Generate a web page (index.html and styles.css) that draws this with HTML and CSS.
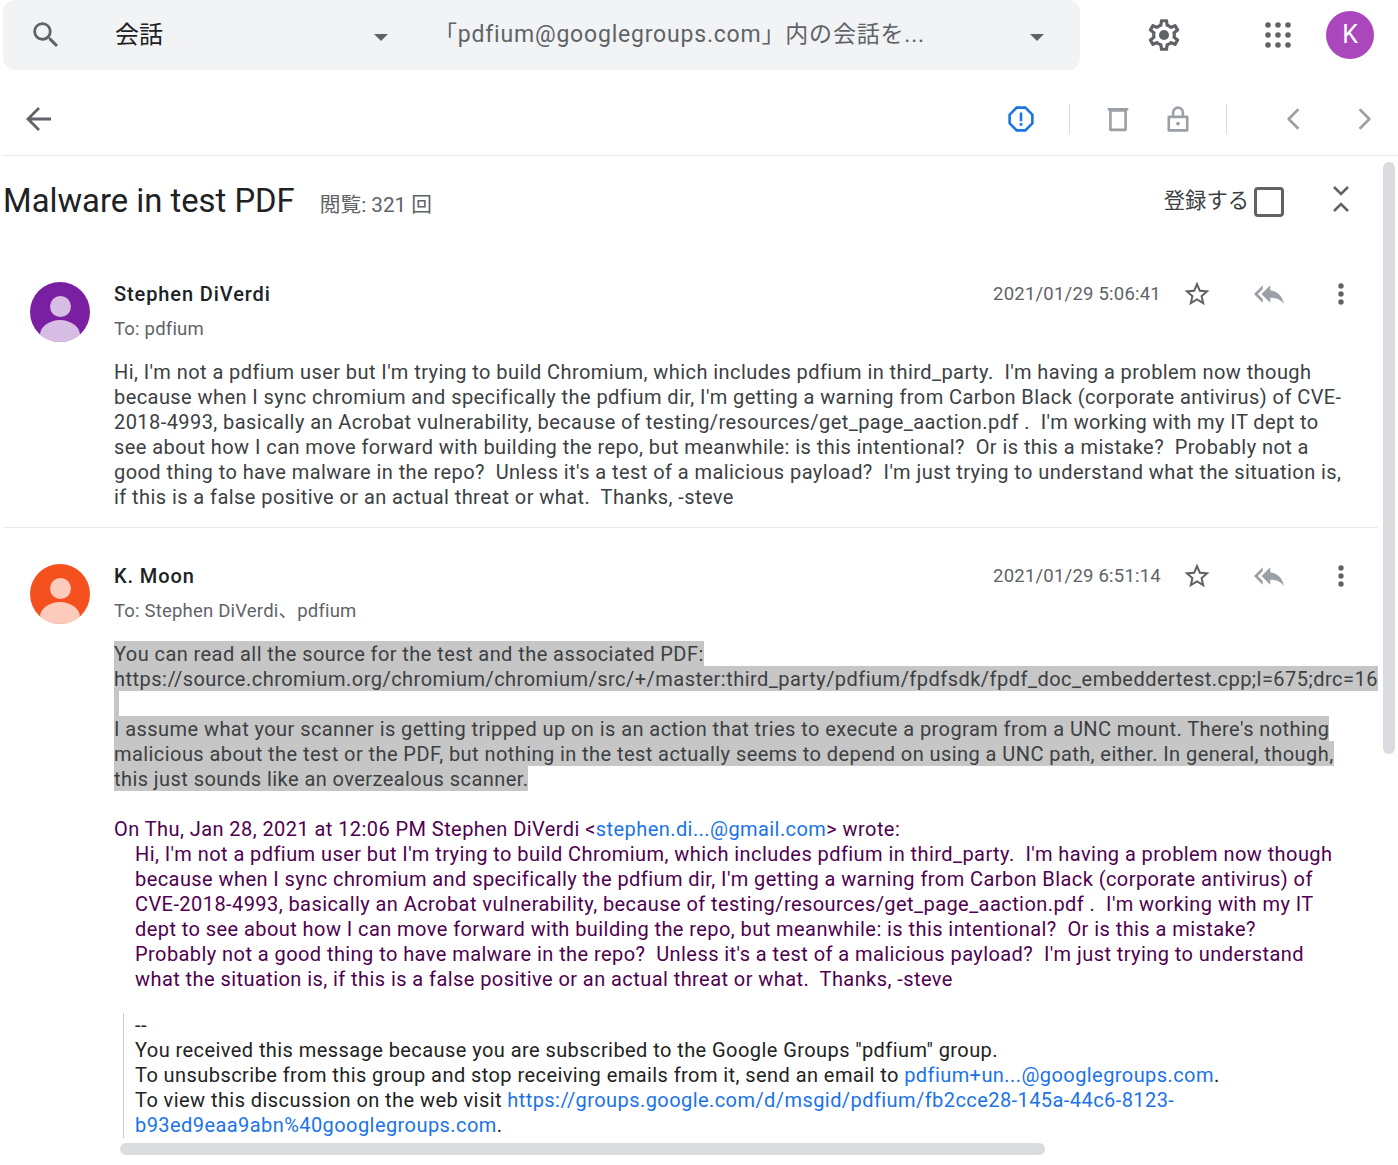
FILE: index.html
```html
<!DOCTYPE html>
<html lang="ja">
<head>
    <meta charset="UTF-8">
    <title>Malware in test PDF</title>
    <link rel="stylesheet" href="styles.css">
</head>
<body>
    <div class="topbar">
        <div class="search-box">
            <svg class="search-icon" viewBox="0 0 24 24"><path d="M15.5 14h-.79l-.28-.27A6.471 6.471 0 0 0 16 9.5 6.5 6.5 0 1 0 9.5 16c1.61 0 3.09-.59 4.23-1.57l.27.28v.79l5 4.99L20.49 19l-4.99-5zm-6 0C7.01 14 5 11.99 5 9.5S7.01 5 9.5 5 14 7.01 14 9.5 11.99 14 9.5 14z"/></svg>
            <span class="scope">会話</span>
            <span class="caret caret-scope"></span>
            <span class="query">「pdfium@googlegroups.com」内の会話を...</span>
            <span class="caret"></span>
        </div>
        <svg class="gear-icon" viewBox="0 0 24 24"><path d="M19.43 12.98c.04-.32.07-.64.07-.98 0-.34-.03-.66-.07-.98l2.11-1.65c.19-.15.24-.42.12-.64l-2-3.46c-.09-.16-.26-.25-.44-.25-.06 0-.12.01-.17.03l-2.49 1c-.52-.4-1.08-.73-1.69-.98l-.38-2.65C14.46 2.18 14.25 2 14 2h-4c-.25 0-.46.18-.49.42l-.38 2.65c-.61.25-1.17.59-1.69.98l-2.49-1c-.06-.02-.12-.03-.18-.03-.17 0-.34.09-.43.25l-2 3.46c-.13.22-.07.49.12.64l2.11 1.65c-.04.32-.07.65-.07.98 0 .33.03.66.07.98l-2.11 1.65c-.19.15-.24.42-.12.64l2 3.46c.09.16.26.25.44.25.06 0 .12-.01.17-.03l2.49-1c.52.4 1.08.73 1.69.98l.38 2.65c.03.24.24.42.49.42h4c.25 0 .46-.18.49-.42l.38-2.65c.61-.25 1.17-.59 1.69-.98l2.49 1c.06.02.12.03.18.03.17 0 .34-.09.43-.25l2-3.46c.12-.22.07-.49-.12-.64l-2.11-1.65zm-1.98-1.71c.04.31.05.52.05.73 0 .21-.02.43-.05.73l-.14 1.13.89.7 1.08.84-.7 1.21-1.27-.51-1.04-.42-.9.68c-.43.32-.84.56-1.25.73l-1.06.43-.16 1.13-.2 1.35h-1.4l-.19-1.35-.16-1.13-1.06-.43c-.43-.18-.83-.41-1.23-.71l-.91-.7-1.06.43-1.27.51-.7-1.21 1.08-.84.89-.7-.14-1.13c-.03-.31-.05-.54-.05-.74s.02-.43.05-.73l.14-1.13-.89-.7-1.08-.84.7-1.21 1.27.51 1.04.42.9-.68c.43-.32.84-.56 1.25-.73l1.06-.43.16-1.13.2-1.35h1.39l.19 1.35.16 1.13 1.06.43c.43.18.83.41 1.23.71l.91.7 1.06-.43 1.27-.51.7 1.21-1.07.85-.89.7.14 1.13z"/><circle cx="12" cy="12" r="3.200"/></svg>
        <svg class="apps-icon" viewBox="0 0 26 26">
            <circle cx="3" cy="3" r="2.800"/><circle cx="13" cy="3" r="2.800"/><circle cx="23" cy="3" r="2.800"/>
            <circle cx="3" cy="13" r="2.800"/><circle cx="13" cy="13" r="2.800"/><circle cx="23" cy="13" r="2.800"/>
            <circle cx="3" cy="23" r="2.800"/><circle cx="13" cy="23" r="2.800"/><circle cx="23" cy="23" r="2.800"/>
        </svg>
        <div class="account">K</div>
    </div>

    <div class="toolbar">
        <svg class="back-icon" viewBox="0 0 26 26"><path d="M25 13H2M13 2 2 13l11 11"/></svg>
        <div class="toolbar-right">
            <span class="tool"><svg class="report-icon" viewBox="0 0 24 24"><path class="outline" d="M8 1.5h8L22.5 8v8L16 22.500H8L1.500 16V8z"/><path class="mark" d="M10.800 6h2.400v8h-2.400zM10.800 15.800h2.400v2.400h-2.400z"/></svg></span>
            <span class="tool-sep"></span>
            <span class="tool"><svg class="muted-icon" viewBox="0 0 24 24"><path d="M5 4h14v18H5zM2.500 3h19"/></svg></span>
            <span class="tool tool-close"><svg class="muted-icon" viewBox="0 0 24 24"><path d="M3.500 10h17v12.500h-17zM7.500 10V6a4.500 4.500 0 0 1 9 0v4"/><circle class="dot" cx="12" cy="16.200" r="1.700"/></svg></span>
            <span class="tool-sep tool-sep-wide"></span>
            <span class="tool"><svg class="muted-icon" viewBox="0 0 24 24"><path d="M17 3 8 12l9 9"/></svg></span>
            <span class="tool"><svg class="muted-icon" viewBox="0 0 24 24"><path d="m7 3 9 9-9 9"/></svg></span>
        </div>
    </div>

    <div class="title-row">
        <h1>Malware in test PDF</h1>
        <span class="views">閲覧: 321 回</span>
        <span class="subscribe">登録する</span>
        <span class="checkbox"></span>
        <svg class="collapse-icon" viewBox="0 0 18 28"><path d="m2 2 7 7 7-7M2 26l7-7 7 7"/></svg>
    </div>

    <div class="message message-first">
        <div class="avatar avatar-purple"><span class="avatar-head"></span><span class="avatar-body"></span></div>
        <div class="message-main">
            <div class="message-head">
                <div class="who">
                    <div class="name">Stephen DiVerdi</div>
                    <div class="to">To: pdfium</div>
                </div>
                <span class="date">2021/01/29 5:06:41</span>
                <span class="act"><svg class="star-icon" viewBox="0 0 24 24"><path d="M22 9.240l-7.190-.62L12 2 9.190 8.630 2 9.240l5.460 4.730L5.820 21 12 17.270 18.180 21l-1.630-7.030L22 9.240zM12 15.400l-3.760 2.270 1-4.280-3.320-2.880 4.380-.38L12 6.100l1.710 4.040 4.380.38-3.320 2.880 1 4.280L12 15.400z"/></svg></span>
                <span class="act"><svg class="reply-icon" viewBox="0 0 24 24"><path d="M7 8V5l-7 7 7 7v-3l-4-4 4-4zm6 1V5l-7 7 7 7v-4.100c5 0 8.500 1.600 11 5.100-1-5-4-10-11-11z"/></svg></span>
                <span class="act"><svg class="more-icon" viewBox="0 0 6 22"><circle cx="3" cy="3" r="2.700"/><circle cx="3" cy="11" r="2.700"/><circle cx="3" cy="19" r="2.700"/></svg></span>
            </div>
            <div class="message-body">
                Hi, I'm not a pdfium user but I'm trying to build Chromium, which includes pdfium in third_party.&nbsp; I'm having a problem now though<br>
                because when I sync chromium and specifically the pdfium dir, I'm getting a warning from Carbon Black (corporate antivirus) of CVE-<br>
                2018-4993, basically an Acrobat vulnerability, because of testing/resources/get_page_aaction.pdf .&nbsp; I'm working with my IT dept to<br>
                see about how I can move forward with building the repo, but meanwhile: is this intentional?&nbsp; Or is this a mistake?&nbsp; Probably not a<br>
                good thing to have malware in the repo?&nbsp; Unless it's a test of a malicious payload?&nbsp; I'm just trying to understand what the situation is,<br>
                if this is a false positive or an actual threat or what.&nbsp; Thanks, -steve
            </div>
        </div>
    </div>

    <div class="message">
        <div class="avatar avatar-orange"><span class="avatar-head"></span><span class="avatar-body"></span></div>
        <div class="message-main">
            <div class="message-head">
                <div class="who">
                    <div class="name">K. Moon</div>
                    <div class="to">To: Stephen DiVerdi、pdfium</div>
                </div>
                <span class="date">2021/01/29 6:51:14</span>
                <span class="act"><svg class="star-icon" viewBox="0 0 24 24"><path d="M22 9.240l-7.190-.62L12 2 9.190 8.630 2 9.240l5.460 4.730L5.820 21 12 17.270 18.180 21l-1.630-7.030L22 9.240zM12 15.400l-3.760 2.270 1-4.280-3.320-2.880 4.380-.38L12 6.100l1.710 4.040 4.380.38-3.320 2.880 1 4.280L12 15.400z"/></svg></span>
                <span class="act"><svg class="reply-icon" viewBox="0 0 24 24"><path d="M7 8V5l-7 7 7 7v-3l-4-4 4-4zm6 1V5l-7 7 7 7v-4.100c5 0 8.500 1.600 11 5.100-1-5-4-10-11-11z"/></svg></span>
                <span class="act"><svg class="more-icon" viewBox="0 0 6 22"><circle cx="3" cy="3" r="2.700"/><circle cx="3" cy="11" r="2.700"/><circle cx="3" cy="19" r="2.700"/></svg></span>
            </div>
            <div class="message-body">
                <div class="sel">You can read all the source for the test and the associated PDF:</div>
                <div class="sel sel-url">https://source.chromium.org/chromium/chromium/src/+/master:third_party/pdfium/fpdfsdk/fpdf_doc_embeddertest.cpp;l=675;drc=16</div>
                <div class="sel sel-empty"></div>
                <div class="sel">I assume what your scanner is getting tripped up on is an action that tries to execute a program from a UNC mount. There's nothing</div>
                <div class="sel">malicious about the test or the PDF, but nothing in the test actually seems to depend on using a UNC path, either. In general, though,</div>
                <div class="sel">this just sounds like an overzealous scanner.</div>
                <div class="blank"></div>
                <div class="quote-head">On Thu, Jan 28, 2021 at 12:06 PM Stephen DiVerdi &lt;<a href="#">stephen.di...@gmail.com</a>&gt; wrote:</div>
                <div class="quote">
                    Hi, I'm not a pdfium user but I'm trying to build Chromium, which includes pdfium in third_party.&nbsp; I'm having a problem now though<br>
                    because when I sync chromium and specifically the pdfium dir, I'm getting a warning from Carbon Black (corporate antivirus) of<br>
                    CVE-2018-4993, basically an Acrobat vulnerability, because of testing/resources/get_page_aaction.pdf .&nbsp; I'm working with my IT<br>
                    dept to see about how I can move forward with building the repo, but meanwhile: is this intentional?&nbsp; Or is this a mistake?<br>
                    Probably not a good thing to have malware in the repo?&nbsp; Unless it's a test of a malicious payload?&nbsp; I'm just trying to understand<br>
                    what the situation is, if this is a false positive or an actual threat or what.&nbsp; Thanks, -steve
                </div>
                <div class="footer-quote">
                    --<br>
                    You received this message because you are subscribed to the Google Groups "pdfium" group.<br>
                    To unsubscribe from this group and stop receiving emails from it, send an email to <a href="#">pdfium+un...@googlegroups.com</a>.<br>
                    To view this discussion on the web visit <a href="#">https://groups.google.com/d/msgid/pdfium/fb2cce28-145a-44c6-8123-<br>b93ed9eaa9abn%40googlegroups.com</a>.
                </div>
            </div>
        </div>
    </div>

    <div class="scroll-v"></div>
    <div class="scroll-h"></div>
</body>
</html>
```

FILE: styles.css
```css
html, body {
    margin: 0;
    height: 1165px;
    overflow: hidden;
}
body {
    position: relative;
    background: #fff;
    font-family: Roboto, "Noto Sans CJK JP", sans-serif;
    color: #3c4043;
}
a {
    color: #1a73e8;
    text-decoration: none;
}

/* top bar */
.topbar {
    display: flex;
    align-items: center;
    height: 70px;
}
.search-box {
    display: flex;
    align-items: center;
    width: 1077px;
    height: 70px;
    margin-left: 3px;
    background: #f1f3f4;
    border-radius: 12px;
    box-sizing: border-box;
}
.search-icon {
    width: 34px;
    height: 34px;
    margin-left: 26px;
    fill: #5f6368;
}
.scope {
    width: 259px;
    margin-left: 52px;
    margin-bottom: 6px;
    font-size: 24px;
    color: #202124;
}
.caret {
    width: 0;
    height: 0;
    margin-top: 4px;
    border-left: 7px solid transparent;
    border-right: 7px solid transparent;
    border-top: 7px solid #5f6368;
}
.caret-scope {
    margin-right: 46px;
}
.query {
    width: 596px;
    margin-bottom: 6px;
    font-size: 23px;
    letter-spacing: .8px;
    color: #5f6368;
    white-space: nowrap;
}
.gear-icon {
    width: 38px;
    height: 38px;
    margin-left: 65px;
    fill: #5f6368;
}
.apps-icon {
    width: 26px;
    height: 26px;
    margin-left: 82px;
    fill: #5f6368;
}
.account {
    width: 48px;
    height: 48px;
    margin-left: 35px;
    border-radius: 50%;
    background: #ab47bc;
    color: #fff;
    font-size: 25px;
    line-height: 48px;
    text-align: center;
}

/* toolbar */
.toolbar {
    display: flex;
    align-items: center;
    justify-content: space-between;
    height: 86px;
    margin-left: 2px;
    padding-top: 13px;
    border-bottom: 1px solid #e8eaed;
    box-sizing: border-box;
}
.back-icon {
    width: 26px;
    height: 26px;
    margin-left: 24px;
    fill: none;
    stroke: #5f6368;
    stroke-width: 2.800;
}
.toolbar-right {
    display: flex;
    align-items: center;
    gap: 24px;
    margin-right: 9px;
}
.tool {
    display: flex;
    justify-content: center;
    width: 48px;
}
.tool-close {
    margin-left: -12px;
}
.tool-sep {
    width: 1px;
    height: 30px;
    background: #dadce0;
}
.tool-sep-wide {
    margin-right: 18px;
}
.report-icon {
    width: 26px;
    height: 26px;
}
.report-icon .outline {
    fill: none;
    stroke: #1a73e8;
    stroke-width: 2.400;
}
.report-icon .mark {
    fill: #1a73e8;
}
.muted-icon {
    width: 26px;
    height: 26px;
    fill: none;
    stroke: #9aa0a6;
    stroke-width: 2.400;
    stroke-linejoin: round;
}
.muted-icon .dot {
    fill: #9aa0a6;
    stroke: none;
}

/* title */
.title-row {
    display: flex;
    align-items: center;
    height: 92px;
    padding-left: 3px;
}
h1 {
    margin: 0 0 2px;
    font-size: 32.800px;
    font-weight: 400;
    color: #202124;
}
.views {
    margin-left: 25px;
    margin-top: 2px;
    margin-right: auto;
    font-size: 20.700px;
    color: #5f6368;
}
.subscribe {
    margin-bottom: 8px;
    font-size: 21.300px;
    color: #3c4043;
}
.checkbox {
    width: 24px;
    height: 24px;
    margin-left: 5px;
    margin-bottom: 1px;
    border: 3px solid #5f6368;
    border-radius: 4px;
}
.collapse-icon {
    width: 18px;
    height: 28px;
    margin: 0 48px 6px;
    fill: none;
    stroke: #5f6368;
    stroke-width: 2.600;
}

/* messages */
.message {
    display: flex;
    width: 1375px;
    margin-left: 3px;
    padding: 36px 0 0 27px;
    box-sizing: border-box;
}
.message-first {
    height: 280px;
    padding-top: 34px;
    border-bottom: 1px solid #e8eaed;
}
.avatar {
    position: relative;
    flex: none;
    width: 60px;
    height: 60px;
    overflow: hidden;
    border-radius: 50%;
}
.avatar-purple {
    background: #7b1fa2;
}
.avatar-orange {
    background: #f4511e;
}
.avatar-head {
    position: absolute;
    left: 20px;
    top: 14px;
    width: 21px;
    height: 21px;
    border-radius: 50%;
    background: #fff;
    opacity: .7;
}
.avatar-body {
    position: absolute;
    left: 10px;
    top: 38px;
    width: 40px;
    height: 30px;
    border-radius: 50%;
    background: #fff;
    opacity: .7;
}
.message-main {
    flex: none;
    width: 1263px;
    margin-left: 24px;
}
.message-head {
    display: flex;
    height: 78px;
}
.who {
    margin-right: auto;
}
.name {
    height: 25px;
    font-size: 20px;
    font-weight: 500;
    line-height: 25px;
    letter-spacing: .9px;
    color: #202124;
}
.to {
    margin-top: 10px;
    font-size: 18.500px;
    line-height: 25px;
    letter-spacing: .2px;
    color: #5f6368;
}
.date {
    font-size: 18.500px;
    line-height: 25px;
    letter-spacing: .22px;
    color: #5f6368;
    white-space: nowrap;
}
.act {
    display: flex;
    align-items: center;
    justify-content: center;
    width: 72px;
    height: 23px;
}
.star-icon {
    width: 30px;
    height: 30px;
    fill: #5f6368;
}
.reply-icon {
    width: 30px;
    height: 30px;
    fill: #9aa0a6;
}
.more-icon {
    width: 6px;
    height: 22px;
    fill: #5f6368;
}
.message-body {
    font-size: 20px;
    line-height: 25px;
    letter-spacing: .43px;
    white-space: nowrap;
}
.sel {
    width: fit-content;
    height: 25px;
    line-height: 27px;
    background: #c6c6c6;
}
.sel:first-child {
    margin-top: -1px;
}
.sel-url {
    letter-spacing: .48px;
}
.sel-empty {
    width: 5px;
}
.blank {
    height: 26px;
}
.quote-head {
    color: #500050;
}
.quote {
    padding-left: 21px;
    color: #500050;
}
.footer-quote {
    margin-top: 21px;
    margin-left: 9px;
    padding-left: 11px;
    border-left: 1px solid #ccc;
    color: #222;
}

/* overlay scrollbars */
.scroll-v {
    position: absolute;
    left: 1383px;
    top: 162px;
    width: 12px;
    height: 592px;
    border-radius: 6px;
    background: #dadce0;
}
.scroll-h {
    position: absolute;
    left: 120px;
    top: 1143px;
    width: 925px;
    height: 12px;
    border-radius: 6px;
    background: #dadce0;
}
```
